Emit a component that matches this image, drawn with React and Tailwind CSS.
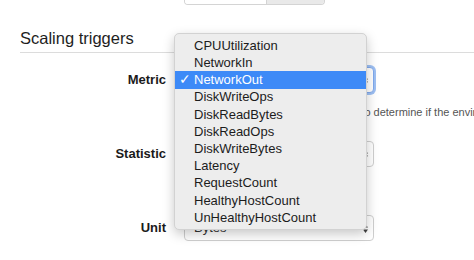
import React from "react";

const items = [
  "CPUUtilization",
  "NetworkIn",
  "NetworkOut",
  "DiskWriteOps",
  "DiskReadBytes",
  "DiskReadOps",
  "DiskWriteBytes",
  "Latency",
  "RequestCount",
  "HealthyHostCount",
  "UnHealthyHostCount",
];

function Arrows() {
  return (
    <svg width="7" height="11" viewBox="0 0 7 11" className="shrink-0">
      <path d="M3.5 1 L6 4.5 L1 4.5 Z" fill="#444" />
      <path d="M3.5 10 L6 6.5 L1 6.5 Z" fill="#444" />
    </svg>
  );
}

function Select({ value, focused }) {
  return (
    <div
      className={
        "w-[190px] h-[26px] rounded-[4px] bg-white flex items-center justify-between pl-[9px] pr-[4px] text-[13px] text-[#333] " +
        (focused
          ? "border border-[#7fa9ee] shadow-[0_0_0_2px_#9ec0f3]"
          : "border border-[#cfcfcf]")
      }
    >
      <span>{value}</span>
      <Arrows />
    </div>
  );
}

export default function App() {
  return (
    <div
      className="relative w-[474px] h-[260px] overflow-hidden bg-white text-[#222]"
      style={{ fontFamily: '"Liberation Sans", Arial, sans-serif' }}
    >
      <div className="ml-[184px] w-[141px] h-[5px] flex border border-t-0 border-[#d4d4d4] rounded-b-[4px] overflow-hidden">
        <div className="w-[81px] bg-white" />
        <div className="flex-1 bg-[#e9e9e9] border-l border-[#d4d4d4]" />
      </div>

      <div className="ml-[20px] mt-[23px] pb-[4px] border-b border-[#dcdcdc] text-[16.5px] leading-[20px] text-[#1e1e1e]">
        Scaling triggers
      </div>

      <div className="mt-[14px] flex flex-col">
        <div className="flex items-center">
          <div className="w-[166px] text-right text-[13px] font-bold text-[#1a1a1a]">Metric</div>
          <div className="ml-[18px]">
            <Select value="NetworkOut" focused />
          </div>
        </div>
        <div className="ml-[184px] mt-[12px] text-[11px] leading-[14px] text-[#555] whitespace-nowrap">
          Choose a measurement to evaluate to determine if the environment needs to scale.
        </div>

        <div className="mt-[22px] flex items-center">
          <div className="w-[166px] text-right text-[13px] font-bold text-[#1a1a1a]">Statistic</div>
          <div className="ml-[18px]">
            <Select value="Average" />
          </div>
        </div>

        <div className="mt-[48px] flex items-center">
          <div className="w-[166px] text-right text-[13px] font-bold text-[#1a1a1a]">Unit</div>
          <div className="ml-[18px]">
            <Select value="Bytes" />
          </div>
        </div>
      </div>

      <div className="absolute left-[174px] top-[33px] w-[193px] rounded-[5px] bg-[#ededed] border border-[#d2d2d2] shadow-[0_4px_12px_rgba(0,0,0,0.22)] py-[3px]">
        {items.map((it) => {
          const sel = it === "NetworkOut";
          return (
            <div
              key={it}
              className={
                "relative h-[17.2px] flex items-center pl-[19px] text-[13px] " +
                (sel ? "bg-[#3d8af7] text-white" : "text-[#1c1c1c]")
              }
            >
              {sel && (
                <span className="absolute left-[4px] text-[14px] leading-[17px]">✓</span>
              )}
              {it}
            </div>
          );
        })}
      </div>
    </div>
  );
}
